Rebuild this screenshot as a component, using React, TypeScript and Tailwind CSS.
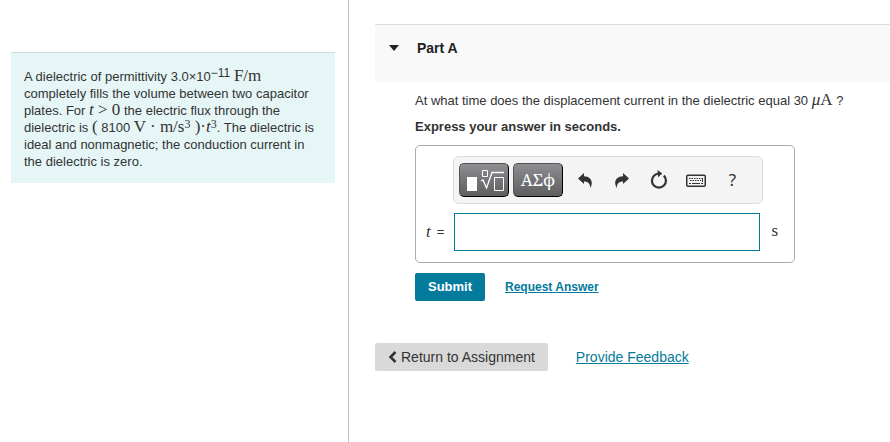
import type { ReactNode } from 'react';

const MATH_FONT = "font-['Liberation_Serif',serif] text-[17px] leading-0";

function MathText({ children, italic }: { children: ReactNode; italic?: boolean }) {
  return <span className={italic ? `${MATH_FONT} italic` : MATH_FONT}>{children}</span>;
}

function Sup({ children }: { children: ReactNode }) {
  return <sup className="-top-1 text-[12px] leading-0">{children}</sup>;
}

function TemplateIcon() {
  return (
    <svg width="40" height="24" viewBox="0 0 40 24" fill="none" stroke="#fff" aria-hidden="true">
      <rect x="3" y="9" width="10" height="14" fill="#fff" stroke="none" />
      <path d="M18.5 2.5h5v6h-5z" strokeWidth="1" />
      <path d="M17 13l2-1 3.5 8L28 4.5h12" strokeWidth="1.3" />
      <path d="M30.5 9.5h9v13h-9z" strokeWidth="1" />
    </svg>
  );
}

function UndoIcon() {
  return (
    <svg width="14" height="15" viewBox="0 0 14 15" fill="#333" aria-hidden="true">
      <path d="M0 5.5L6 0v3.2c5 .2 8 3 7.8 7.3-.1 1.8-.8 3-1.8 4.5.4-4-1.6-6.5-6-6.5V11z" />
    </svg>
  );
}

function RedoIcon() {
  return (
    <svg width="14" height="15" viewBox="0 0 14 15" fill="#333" aria-hidden="true">
      <path d="M14 5.5L8 0v3.2C3 3.4 0 6.2.2 10.5c.1 1.8.8 3 1.8 4.5-.4-4 1.6-6.5 6-6.5V11z" />
    </svg>
  );
}

function ResetIcon() {
  return (
    <svg width="18" height="20" viewBox="0 0 18 20" fill="none" aria-hidden="true">
      <path d="M13.8 5.6A7 7 0 1 1 4.2 5.5Q6 3.7 9 3.5" stroke="#333" strokeWidth="2.2" />
      <path d="M7.5 0l4.8 3.4-4.3 3.8z" fill="#333" />
    </svg>
  );
}

function KeyboardIcon() {
  return (
    <svg width="20" height="13" viewBox="0 0 20 13" fill="none" stroke="#333" aria-hidden="true">
      <rect x="0.75" y="1.25" width="18.5" height="11" rx="1" strokeWidth="1.5" />
      <path d="M3 4.5h14M4 6.5h11" strokeDasharray="1.5 1" />
      <path d="M3 9.5h2M6 9.5h8M15 9.5h2M16.5 4v4" />
    </svg>
  );
}

const TOOLS = [
  { label: 'Undo', icon: <UndoIcon /> },
  { label: 'Redo', icon: <RedoIcon /> },
  { label: 'Reset', icon: <ResetIcon /> },
  { label: 'Keyboard shortcuts', icon: <KeyboardIcon /> },
];

const DARK_BTN =
  'flex h-[34px] w-[50px] items-center justify-center rounded-[5px] border border-t-[#555] border-l-[#555] border-r-black border-b-black bg-linear-to-b from-[#8e8e93] to-[#5e5e60] text-white';

function Toolbar() {
  return (
    <div className="flex h-12 items-center rounded-md border border-[#ddd] bg-[#f4f4f4] px-[5px]">
      <div className="flex gap-1">
        <button className={DARK_BTN} aria-label="Templates"><TemplateIcon /></button>
        <button className={`${DARK_BTN} font-['Noto_Serif','Liberation_Serif',serif] text-[17px]`}>ΑΣϕ</button>
      </div>
      <div className="ml-[3px] flex">
        {TOOLS.map((tool) => (
          <button key={tool.label} aria-label={tool.label} className="flex h-[34px] w-[37px] items-center justify-center">
            {tool.icon}
          </button>
        ))}
        <button aria-label="Help" className="h-[34px] w-[37px] text-center font-['Noto_Sans',sans-serif] text-[17px]">?</button>
      </div>
    </div>
  );
}

function ProblemText() {
  return (
    <aside className="w-[349px] shrink-0 border-r border-[#b4c8da] pt-[52px] pr-[13px] pl-[11px]">
      <div className="border-t border-[#d0dddd] bg-[#e6f6f6] px-[13px] pt-[15px] pb-[13px] text-[13px] leading-[17px] text-[#333]">
        A dielectric of permittivity 3.0×10<Sup>−11</Sup> <MathText>F/m</MathText>
        <br />
        completely fills the volume between two capacitor
        <br />
        plates. For <MathText><i>t</i> &gt; 0</MathText> the electric flux through the
        <br />
        dielectric is <MathText>(</MathText> 8100 <MathText>V · m/s<Sup>3</Sup> )·<i>t</i><Sup>3</Sup></MathText>. The dielectric is
        <br />
        ideal and nonmagnetic; the conduction current in
        <br />
        the dielectric is zero.
      </div>
    </aside>
  );
}

export default function App() {
  return (
    <div className="flex min-h-screen bg-white font-['Liberation_Sans',Arial,sans-serif] text-[13px] text-[#333]">
      <ProblemText />
      <main className="min-w-0 flex-1 pt-6 pl-[26px]">
        <header className="flex h-[58px] items-start border-t border-[#ddd] bg-[#f9f9f9] pt-[13px] pl-[14px]">
          <button className="flex items-center gap-[18px] text-sm font-bold text-[#222]">
            <svg width="10" height="6" viewBox="0 0 10 6" fill="#222" aria-hidden="true">
              <path d="M0 0h10L5 6z" />
            </svg>
            Part A
          </button>
        </header>

        <section className="pt-[9px] pl-10">
          <p className="leading-5">
            At what time does the displacement current in the dielectric equal 30{' '}
            <MathText><i>μ</i>A</MathText> ?
          </p>
          <p className="mt-1.5 leading-5 font-bold">Express your answer in seconds.</p>

          <div className="mt-2 max-w-[380px] rounded-[5px] border border-[#aaa] pt-2.5 pr-4 pb-[11px] pl-2.5">
            <div className="pr-[15px] pl-[27px]">
              <Toolbar />
            </div>
            <div className="mt-[9px] flex items-center">
              <label htmlFor="answer" className="flex w-7 shrink-0 items-center gap-1.5">
                <MathText italic>t</MathText> =
              </label>
              <input id="answer" type="text" className="h-[38px] min-w-0 flex-1 border border-[#047a9c] bg-white px-2 outline-none" />
              <span className="w-[18px] shrink-0 text-right"><MathText>s</MathText></span>
            </div>
          </div>

          <div className="mt-2.5 flex items-center gap-5">
            <button className="h-7 w-[70px] rounded-xs bg-[#047a9c] font-bold text-white">Submit</button>
            <a href="#answer" className="text-xs font-bold text-[#047a9c] underline">Request Answer</a>
          </div>
        </section>

        <footer className="mt-[42px] flex items-center gap-7">
          <button className="flex h-7 items-center gap-1 rounded-xs bg-[#d9d9d9] px-[13px] text-sm text-[#333]">
            <svg width="9" height="12" viewBox="0 0 9 12" fill="none" stroke="#333" strokeWidth="2.5" aria-hidden="true">
              <path d="M7.5 1L2.5 6l5 5" />
            </svg>
            Return to Assignment
          </button>
          <a href="#feedback" className="text-sm text-[#047a9c] underline">Provide Feedback</a>
        </footer>
      </main>
    </div>
  );
}
